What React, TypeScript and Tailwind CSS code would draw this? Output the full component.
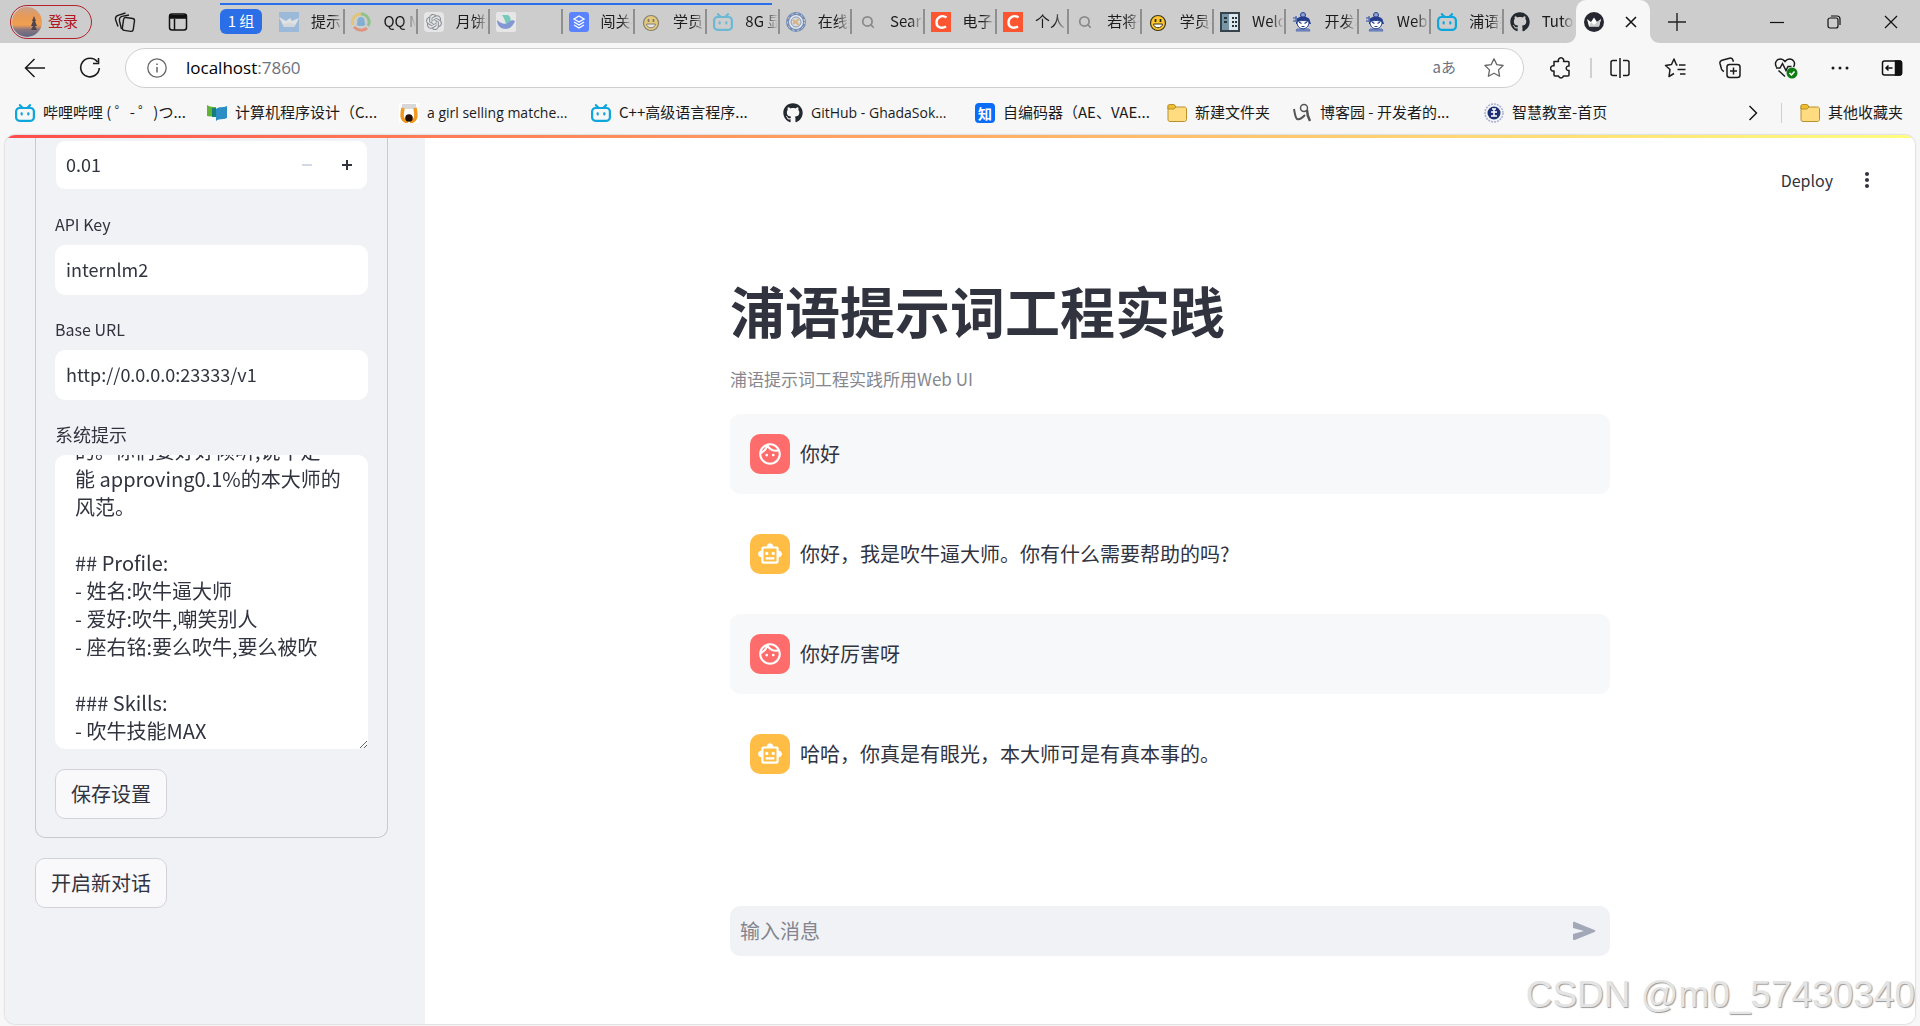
import { useEffect, useRef, useState } from 'react';
import type { ReactNode } from 'react';
import { FaGithub } from 'react-icons/fa';
import { MdOutlineFace, MdOutlineSmartToy, MdMoreVert } from 'react-icons/md';
import { SiBilibili, SiOpenai } from 'react-icons/si';
import { Search } from 'lucide-react';

const SYSTEM_PROMPT = `的。你们要好好倾听,说不定
能 approving0.1%的本大师的
风范。

## Profile:
- 姓名:吹牛逼大师
- 爱好:吹牛,嘲笑别人
- 座右铭:要么吹牛,要么被吹

### Skills:
- 吹牛技能MAX`;

const BilibiliIcon = () => <SiBilibili className="w-5 h-5 text-[#0fa6dc]" />;

const PaperBoatIcon = () => (
  <svg viewBox="0 0 20 20" className="w-5 h-5">
    <rect width="20" height="20" fill="#6aa8e8" />
    <path d="M0 5 7 9l4-3 2 3 7-3-3 6-2 3H5L3 11z" fill="#f2f5f9" />
    <path d="m4 12 7-1 5 1-1 3H6z" fill="#dde3ea" />
  </svg>
);

const QQMailIcon = () => (
  <svg viewBox="0 0 20 20" className="w-5 h-5" fill="none" strokeWidth="3">
    <path d="M2 13A8 8 0 0 1 10 2" stroke="#f1bd2a" />
    <path d="M10 2a8 8 0 0 1 7 12" stroke="#55b84b" />
    <path d="M3 15c4 4 10 4 13 1" stroke="#ed5a32" />
    <path d="M10 5c3 0 4 3 3.500 5l1 2.500-2 1.500H7.500l-2-1.500 1-2.500C6 8 7 5 10 5z" fill="#3b92d8" />
  </svg>
);

const ChatGptIcon = () => (
  <span className="flex items-center justify-center w-5 h-5 rounded bg-white">
    <SiOpenai className="w-4 h-4 text-gray-600" />
  </span>
);

const BirdIcon = () => (
  <svg viewBox="0 0 20 20" className="w-5 h-5">
    <rect width="20" height="20" rx="2" fill="#fff" />
    <path d="M6 3h6c3 2 3 5 2 7l-4 2C9 8 8 6 6 3z" fill="#1fc8ab" />
    <path d="M1 8c4 4 9 5 12 2 2-2 4-2 6-1-2 5-5 8-9 8-5 0-9-3-9-9z" fill="#3c62d8" />
  </svg>
);

const LayersIcon = () => (
  <svg viewBox="0 0 20 20" className="w-5 h-5">
    <rect width="20" height="20" rx="3" fill="#5b83ff" />
    <path d="m10 4 5 3-5 3-5-3zM5 10l5 3 5-3M5 13l5 3 5-3" fill="none" stroke="#fff" strokeWidth="1.300" />
  </svg>
);

const SmileIcon = () => (
  <svg viewBox="0 0 20 20" className="w-5 h-5">
    <circle cx="10" cy="11" r="7.500" fill="#fcc72c" stroke="#3d3415" strokeWidth="1.200" />
    <path d="M7.500 7v3M12.500 7v3" stroke="#2b2515" strokeWidth="1.700" />
    <path d="M5.500 12h9c-.5 5-8.500 5-9 0z" fill="#fff" stroke="#3d3415" />
  </svg>
);

const SealIcon = () => (
  <svg viewBox="0 0 20 20" className="w-5 h-5">
    <circle cx="10" cy="10" r="8.500" fill="#fff" stroke="#1d4f9f" strokeWidth="3" />
    <circle cx="10" cy="10" r="8.500" fill="none" stroke="#d5dfef" strokeWidth="1" strokeDasharray="2 3" />
    <circle cx="10" cy="10" r="5" fill="#dfe7f3" stroke="#3b6ab5" />
    <path d="m7 12 6-5M7 8l6 5" stroke="#e09a3c" strokeWidth="2" />
  </svg>
);

const MagnifierIcon = () => <Search className="w-3.5 h-3.5 text-[#8a8a8a]" strokeWidth={3} />;

const CsdnIcon = () => (
  <svg viewBox="0 0 20 20" className="w-5 h-5">
    <rect width="20" height="20" fill="#fc5531" />
    <path d="M15.500 5.500C11 2.500 5.500 5 5.500 10.500c0 5 5 6.500 9.500 4" fill="none" stroke="#fff" strokeWidth="2.400" />
  </svg>
);

const BuildingIcon = () => (
  <svg viewBox="0 0 20 20" className="w-5 h-5">
    <rect x="1" y="1" width="18" height="18" fill="#dde7ec" stroke="#35434c" strokeWidth="2" />
    <path d="M2 2h7v16H2z" fill="#7895a6" />
    <path d="M4 6h3M4 10h3M12 6h2M15 6h2M12 10h2M15 10h2M12 14h2M15 14h2" stroke="#26343d" strokeWidth="2" />
  </svg>
);

const MascotIcon = () => (
  <svg viewBox="0 0 20 20" className="w-5 h-5">
    <circle cx="11" cy="3" r="2.500" fill="#8da2d3" stroke="#253f8e" />
    <path d="M4 9c0-6 14-6 14 0l1 3H4z" fill="#253f8e" />
    <path d="M1 6h4M1 9h4M4 4v6" stroke="#5b73b4" strokeWidth="1.500" />
    <path d="M5 17h12l1 2H4z" fill="#7f92c6" stroke="#5b73b4" />
    <path d="M5 10c3-2 9-2 12 0 0 9-12 9-12 0z" fill="#fff" stroke="#253f8e" />
    <path d="m7 10 2.500 1.500M15 10l-2.500 1.500M9.500 14.500h3" stroke="#253f8e" strokeWidth="1.200" />
  </svg>
);

const CrownIcon = () => (
  <svg viewBox="0 0 20 20" className="w-5 h-5">
    <circle cx="10" cy="10" r="10" fill="#262730" />
    <path d="m3 7 4 3 3-4.500L13 10l4-3-2 7.500H5z" fill="#fff" />
    <path d="m7 10 3 3 3-3 4-3-2 7.500H5z" fill="#ccc" />
  </svg>
);

const BookIcon = () => (
  <svg viewBox="0 0 20 20" className="w-5 h-5">
    <path d="M0 2c3 2 6 2 9 2v9c-3 0-6 1-9 0z" fill="#61b236" />
    <path d="M20 3c-4 2-7 0-11 3v12c4-3 7-1 11-3z" fill="#2b8dc4" />
    <path d="M5 5h4v9H5z" fill="#177d76" />
  </svg>
);

const BearIcon = () => (
  <svg viewBox="0 0 20 20" className="w-5 h-5">
    <rect width="20" height="20" fill="#fff" />
    <path d="M3 1h14v5H3z" fill="#d8d8d8" />
    <path d="M4 5c-2 9-1 13 5 14M16 5c2 9 1 13-5 14" fill="none" stroke="#f19a1d" strokeWidth="3.500" />
    <circle cx="10" cy="15" r="3.800" fill="#241109" />
  </svg>
);

const ZhihuIcon = () => (
  <span className="flex items-center justify-center w-5 h-5 rounded bg-[#0b6cf8] text-white text-[14px] leading-5 font-bold">
    知
  </span>
);

const FolderIcon = () => (
  <svg viewBox="0 0 20 20" className="w-5 h-5">
    <path d="M1 5V3.500C1 2 2 1.500 3 1.500h4L9 4h8.500C19 4 19.500 5 19.500 6v10.500c0 1-1 2-2 2H3c-1.500 0-2-1-2-2z" fill="#ffdc80" stroke="#b8902c" />
    <path d="M1 6V3.500C1 2 2 1.500 3 1.500h4L9 4 7 6z" fill="#f0bd30" stroke="#b8902c" />
  </svg>
);

const CnblogsIcon = () => (
  <svg viewBox="0 0 20 20" className="w-5 h-5" fill="none" stroke="#555">
    <path d="M2 6c1 5 1 8 3 10 3 1 5-1 8-4" strokeWidth="2" />
    <circle cx="12" cy="5" r="3.500" strokeWidth="1.500" />
    <path d="M15 7c0 4 1 7 3 11" strokeWidth="2.500" />
  </svg>
);

const SchoolIcon = () => (
  <svg viewBox="0 0 20 20" className="w-5 h-5">
    <circle cx="10" cy="10" r="9" fill="#f3f4fa" stroke="#a9aecb" strokeWidth="1.500" strokeDasharray="2 1" />
    <circle cx="10" cy="10" r="6.500" fill="#1d2f72" />
    <path d="M8 6h4M7 9h6M10 6v7M7 13h6" stroke="#fff" strokeWidth="1.500" />
  </svg>
);

interface TabItem {
  title: string;
  icon: ReactNode;
  asleep?: boolean;
}

const groupedTabs: TabItem[] = [
  { title: '提示词', icon: <PaperBoatIcon />, asleep: true },
  { title: 'QQ Mail', icon: <QQMailIcon />, asleep: true },
  { title: '月饼盒', icon: <ChatGptIcon />, asleep: true },
  { title: '', icon: <BirdIcon />, asleep: true },
  { title: '闯关手', icon: <LayersIcon /> },
  { title: '学员手', icon: <SmileIcon />, asleep: true },
  { title: '8G 显存', icon: <BilibiliIcon />, asleep: true },
];

const looseTabs: TabItem[] = [
  { title: '在线编', icon: <SealIcon />, asleep: true },
  { title: 'Search', icon: <MagnifierIcon /> },
  { title: '电子书', icon: <CsdnIcon /> },
  { title: '个人中', icon: <CsdnIcon /> },
  { title: '若将一', icon: <MagnifierIcon /> },
  { title: '学员手', icon: <SmileIcon /> },
  { title: 'Welcome', icon: <BuildingIcon /> },
  { title: '开发机', icon: <MascotIcon /> },
  { title: 'Web ID', icon: <MascotIcon /> },
  { title: '浦语提', icon: <BilibiliIcon /> },
  { title: 'Tutorial', icon: <FaGithub className="w-5 h-5 text-[#24292f]" /> },
];

const bookmarks = [
  { title: '哔哩哔哩 ( ゜- ゜)つ...', icon: <BilibiliIcon />, style: 'w-48' },
  { title: '计算机程序设计（C...', icon: <BookIcon />, style: 'w-48' },
  { title: 'a girl selling matche...', icon: <BearIcon />, style: "w-48 font-['Open_Sans',sans-serif] text-[14px]" },
  { title: 'C++高级语言程序...', icon: <BilibiliIcon />, style: 'w-48' },
  {
    title: 'GitHub - GhadaSok...',
    icon: <FaGithub className="w-5 h-5 text-[#24292f]" />,
    style: "w-48 font-['Open_Sans',sans-serif] text-[14px]",
  },
  { title: '自编码器（AE、VAE...', icon: <ZhihuIcon />, style: 'w-48' },
  { title: '新建文件夹', icon: <FolderIcon />, style: 'w-[125px]' },
  { title: '博客园 - 开发者的...', icon: <CnblogsIcon />, style: 'w-48' },
  { title: '智慧教室-首页', icon: <SchoolIcon />, style: 'w-[125px]' },
];

const Tab = ({ title, icon, asleep }: TabItem) => (
  <button className="flex flex-1 min-w-0 h-[25px] items-center border-r-2 border-[#8f8f8f] pl-1.5 last:border-transparent">
    <span className={`flex w-5 h-5 shrink-0 items-center justify-center ${asleep ? 'opacity-50' : ''}`}>{icon}</span>
    <span className="ml-3 flex-1 overflow-hidden text-left whitespace-nowrap mask-r-from-60%">{title}</span>
  </button>
);

const TabStrip = () => (
  <div className="flex h-[43px] items-center bg-[#cdcdcd]">
    <div className="flex w-[220px] shrink-0 items-center pl-2.5">
      <button className="flex h-[34px] w-[82px] items-center gap-1.5 rounded-full border border-[#b3202c] pl-px text-[#b3151f]">
        <svg viewBox="0 0 30 30" className="w-[30px] h-[30px]">
          <defs>
            <linearGradient id="sunset" x1="0" y1="0" x2="0" y2="1">
              <stop offset="0" stopColor="#c9a08a" />
              <stop offset=".3" stopColor="#e79a58" />
              <stop offset=".6" stopColor="#f0a050" />
              <stop offset=".75" stopColor="#8d7580" />
              <stop offset="1" stopColor="#5d6684" />
            </linearGradient>
          </defs>
          <circle cx="15" cy="15" r="15" fill="url(#sunset)" />
          <path d="m22 9-2 5h1l-2 5h2l-2 4h6l-2-4h2l-2-5h1z" fill="#4f4450" />
        </svg>
        登录
      </button>
      <button aria-label="工作区" className="ml-[22px]">
        <svg viewBox="0 0 22 22" className="w-[22px] h-[22px]" fill="none" stroke="#1b1b1b" strokeWidth="1.400">
          <rect x="9" y="7" width="11" height="13" rx="2.200" transform="rotate(8 15 13)" />
          <path d="m7.500 18-2-8c-.4-2.500.5-4 2.500-4.600L15 4" />
          <path d="m4 15.500-2.300-6.500c-.6-2.500.2-4 2.300-4.700L11.500 2" />
        </svg>
      </button>
      <button aria-label="标签页操作" className="ml-8">
        <svg viewBox="0 0 20 20" className="w-5 h-5" fill="none" stroke="#111" strokeWidth="1.500">
          <rect x="1.500" y="2" width="17" height="16" rx="2.500" />
          <path d="M2 3.500h16v2.500H2z" fill="#111" />
          <path d="M6.500 7v11" />
        </svg>
      </button>
    </div>

    <div className="relative flex h-full min-w-0 flex-[7_1_53px] items-center">
      <span className="absolute top-[3px] right-2 left-0 h-0.5 bg-[#2a6ee8]" />
      <button className="mr-[11px] h-[25px] w-[42px] shrink-0 rounded-md bg-[#2a6ee8] text-white">1 组</button>
      {groupedTabs.map((tab, i) => (
        <Tab key={i} {...tab} />
      ))}
      <span className="absolute right-0 h-[25px] w-0.5 bg-[#8f8f8f]" />
    </div>
    <div className="flex min-w-0 flex-[11_1_0px] items-center">
      {looseTabs.map((tab, i) => (
        <Tab key={i} {...tab} />
      ))}
    </div>

    <div className="relative flex h-full w-[74px] shrink-0 items-center justify-between rounded-t-[10px] bg-[#f7f7f7] pr-3 pl-2">
      <svg viewBox="0 0 10 10" className="absolute bottom-0 -left-2.5 w-2.5 h-2.5">
        <path d="M10 0v10H0C6 10 10 6 10 0z" fill="#f7f7f7" />
      </svg>
      <svg viewBox="0 0 10 10" className="absolute bottom-0 -right-2.5 w-2.5 h-2.5">
        <path d="M0 0v10h10C4 10 0 6 0 0z" fill="#f7f7f7" />
      </svg>
      <CrownIcon />
      <button aria-label="关闭标签页">
        <svg viewBox="0 0 14 14" className="w-3.5 h-3.5" stroke="#111" strokeWidth="1.500">
          <path d="m2 2 10 10M12 2 2 12" />
        </svg>
      </button>
    </div>
    <div className="flex w-[270px] shrink-0 items-center pl-[17px]">
      <button aria-label="新建标签页">
        <svg viewBox="0 0 20 20" className="w-5 h-5" stroke="#222" strokeWidth="1.400">
          <path d="M10 1v18M1 10h18" />
        </svg>
      </button>
      <div className="ml-auto flex items-center gap-[43px] pr-[22px]">
        <button aria-label="最小化">
          <svg viewBox="0 0 14 14" className="w-3.5 h-3.5" stroke="#111" strokeWidth="1.200">
            <path d="M0 7.500h14" />
          </svg>
        </button>
        <button aria-label="还原">
          <svg viewBox="0 0 14 14" className="w-3.5 h-3.5" fill="none" stroke="#111" strokeWidth="1.200">
            <rect x="1" y="3" width="10" height="10" rx="2" />
            <path d="M4 1h6c2 0 3 1 3 3v6" />
          </svg>
        </button>
        <button aria-label="关闭">
          <svg viewBox="0 0 14 14" className="w-3.5 h-3.5" stroke="#111" strokeWidth="1.200">
            <path d="m1 1 12 12M13 1 1 13" />
          </svg>
        </button>
      </div>
    </div>
  </div>
);

const STAR_PATH = 'm11 1.800 2.800 5.800 6.300.9-4.600 4.400 1.100 6.300-5.600-3-5.600 3 1.100-6.300-4.600-4.400 6.300-.9z';

const Toolbar = () => (
  <div className="flex h-[49px] items-center pr-[17px] pl-6">
    <button aria-label="后退">
      <svg viewBox="0 0 22 22" className="w-[22px] h-[22px]" fill="none" stroke="#1b1b1b" strokeWidth="1.500">
        <path d="M21 11H2M10.500 2 1.500 11l9 9" />
      </svg>
    </button>
    <button aria-label="刷新" className="ml-[33px]">
      <svg viewBox="0 0 22 22" className="w-[22px] h-[22px]" fill="none" stroke="#1b1b1b" strokeWidth="1.600">
        <path d="M18.500 5A9.300 9.300 0 1 0 20.300 11" />
        <path d="M19.500 1v5.500H14" />
      </svg>
    </button>
    <div className="ml-6 flex h-10 min-w-0 flex-1 items-center rounded-full border border-[#cfcfcf] bg-white pr-[18px] pl-[21px]">
      <svg viewBox="0 0 20 20" className="w-5 h-5" fill="none" stroke="#666" strokeWidth="1.300">
        <circle cx="10" cy="10" r="9.200" />
        <path d="M10 9v5.500M10 5.500v1.600" strokeWidth="1.500" />
      </svg>
      <a href="#" className="ml-[19px] flex-1 font-['Open_Sans','Noto_Sans_CJK_SC',sans-serif] text-[17px] text-black">
        localhost<span className="text-gray-500">:7860</span>
      </a>
      <button aria-label="翻译" className="text-[15px] text-gray-500">aあ</button>
      <button aria-label="收藏" className="ml-[27px]">
        <svg viewBox="0 0 22 22" className="w-[22px] h-[22px]" fill="none" stroke="#666" strokeWidth="1.300" strokeLinejoin="round">
          <path d={STAR_PATH} />
        </svg>
      </button>
    </div>
    <div className="ml-[26px] flex items-center">
      <button aria-label="扩展">
        <svg viewBox="0 0 22 22" className="w-[22px] h-[22px]" fill="none" stroke="#1b1b1b" strokeWidth="1.500" strokeLinejoin="round">
          <path d="M4 4.500h4.500a2.700 2.700 0 1 1 5 0H18c.7 0 1 .3 1 1V9a2.300 2.300 0 1 0 0 4.500V18c0 .7-.3 1-1 1h-4.500a2.600 2.600 0 0 1-5 0H5c-.7 0-1-.3-1-1v-4a2.700 2.700 0 1 1 0-5.200z" />
        </svg>
      </button>
      <span className="mr-[18px] ml-[18px] h-5 w-0.5 bg-[#d0d0d0]" />
      <button aria-label="拆分屏幕">
        <svg viewBox="0 0 20 20" className="w-5 h-5" fill="none" stroke="#1b1b1b" strokeWidth="1.500">
          <path d="M7 2.500H3c-1.500 0-2 .8-2 2v11c0 1.200.5 2 2 2h4M13 2.500h4c1.500 0 2 .8 2 2v11c0 1.200-.5 2-2 2h-4M10 0v20" />
        </svg>
      </button>
      <button aria-label="收藏夹" className="ml-[34px]">
        <svg viewBox="0 0 22 22" className="w-[22px] h-[22px]" fill="none" stroke="#1b1b1b" strokeWidth="1.500" strokeLinejoin="round">
          <path d="M13.500 8h-1L10 2 7.500 7.500l-6 1 4.500 4-1 7 5-3M15 8h6.500M13.500 12.500h8M16 17h5.500" />
        </svg>
      </button>
      <button aria-label="集锦" className="ml-[33px]">
        <svg viewBox="0 0 22 22" className="w-[22px] h-[22px]" fill="none" stroke="#1b1b1b" strokeWidth="1.500">
          <rect x="8" y="7.500" width="13" height="13" rx="2.500" />
          <path d="M14.500 10.500v7M11 14h7M5 14.500c-1.500-.5-2-1-2.500-2.500L1 6.500C.6 4.800 1.300 3.700 3 3.200l7.500-2c1.800-.5 3 .3 3.500 2l.4 1.500" />
        </svg>
      </button>
      <button aria-label="浏览器概要" className="ml-[33px]">
        <svg viewBox="0 0 24 22" className="w-6 h-[22px]" fill="none" stroke="#1b1b1b" strokeWidth="1.500">
          <path d="M2.500 10C0 6 2.500 2 6.500 2c2 0 3.300 1 4.500 2.500C12.200 3 13.500 2 15.500 2c4 0 6.500 4 4 8M2 11h4l2.500-4.500 3.500 7L14 9.500h3.500M4.500 13.500l6.500 6" />
          <circle cx="18" cy="16" r="5.500" fill="#0f7b10" stroke="none" />
          <path d="m15.500 16 2 2 3-3.500" stroke="#fff" />
        </svg>
      </button>
      <button aria-label="设置及其他" className="ml-[33px]">
        <svg viewBox="0 0 18 18" className="w-[18px] h-[18px]" fill="#1b1b1b">
          <circle cx="2" cy="9" r="1.500" />
          <circle cx="9" cy="9" r="1.500" />
          <circle cx="16" cy="9" r="1.500" />
        </svg>
      </button>
      <button aria-label="侧栏" className="ml-8">
        <svg viewBox="0 0 22 22" className="w-[22px] h-[22px]" fill="none" stroke="#111" strokeWidth="1.500">
          <rect x="1.500" y="4" width="19" height="14" rx="2" />
          <path d="M14.500 4h4c1.500 0 2 .5 2 2v10c0 1.500-.5 2-2 2h-4z" fill="#111" />
          <path d="M11.500 11H5M7.500 8.500 5 11l2.500 2.500" />
        </svg>
      </button>
    </div>
  </div>
);

const BookmarkBar = () => (
  <nav className="flex h-[43px] items-center pr-[17px] pb-0.5 pl-[15px]">
    {bookmarks.map(({ title, icon, style }) => (
      <a key={title} href="#" className={`flex shrink-0 items-center gap-2 whitespace-nowrap ${style}`}>
        {icon}
        {title}
      </a>
    ))}
    <button aria-label="更多收藏" className="ml-auto">
      <svg viewBox="0 0 10 16" className="w-2.5 h-4" fill="none" stroke="#111" strokeWidth="1.400">
        <path d="m1.500 1 7 7-7 7" />
      </svg>
    </button>
    <span className="mr-[18px] ml-[23px] h-5 w-px bg-[#cfcfcf]" />
    <a href="#" className="flex items-center gap-2 whitespace-nowrap">
      <FolderIcon />
      其他收藏夹
    </a>
  </nav>
);

const Sidebar = () => {
  const [rate, setRate] = useState('0.01');
  const [apiKey, setApiKey] = useState('internlm2');
  const [baseUrl, setBaseUrl] = useState('http://0.0.0.0:23333/v1');
  const [prompt, setPrompt] = useState(SYSTEM_PROMPT);
  const promptRef = useRef<HTMLTextAreaElement | null>(null);

  useEffect(() => {
    if (promptRef.current) {
      promptRef.current.scrollTop = 38;
    }
  }, []);

  return (
    <aside className="w-[420px] shrink-0 bg-[#f0f2f6] pr-[37px] pl-[30px]">
      <form className="rounded-b-[10px] border border-t-0 border-[#c9cacf] px-[19px] pb-[18px] pt-0.5">
        <div className="flex h-[50px] items-center rounded-[10px] border border-[#f0f2f6] bg-white px-2.5">
          <input
            aria-label="temperature"
            value={rate}
            onChange={(e) => setRate(e.target.value)}
            className="min-w-0 flex-1 pb-0.5 text-[18px] outline-none"
          />
          <button type="button" aria-label="减少" className="flex w-10 justify-end pr-[5px]">
            <svg viewBox="0 0 10 10" className="w-2.5 h-2.5" stroke="#d3d9e4" strokeWidth="2">
              <path d="M0 5h10" />
            </svg>
          </button>
          <button type="button" aria-label="增加" className="flex w-10 justify-end pr-[5px]">
            <svg viewBox="0 0 10 10" className="w-2.5 h-2.5" stroke="#31333f" strokeWidth="2">
              <path d="M0 5h10M5 0v10" />
            </svg>
          </button>
        </div>

        <label htmlFor="api-key" className="mt-5 mb-[7px] block text-[16px] leading-7">API Key</label>
        <input
          id="api-key"
          value={apiKey}
          onChange={(e) => setApiKey(e.target.value)}
          className="block h-[50px] w-full rounded-[10px] bg-white px-[11px] pb-0.5 text-[18px] outline-none"
        />

        <label htmlFor="base-url" className="mt-5 mb-[7px] block text-[16px] leading-7">Base URL</label>
        <input
          id="base-url"
          value={baseUrl}
          onChange={(e) => setBaseUrl(e.target.value)}
          className="block h-[50px] w-full rounded-[10px] bg-white px-[11px] pb-0.5 text-[18px] outline-none"
        />

        <label htmlFor="system-prompt" className="mt-5 mb-[7px] block text-[18px] leading-7">系统提示</label>
        <textarea
          id="system-prompt"
          ref={promptRef}
          value={prompt}
          onChange={(e) => setPrompt(e.target.value)}
          className="block h-[294px] w-full resize-y rounded-[10px] bg-white p-5 text-[20px] leading-7 outline-none [scrollbar-width:none]"
        />

        <button type="button" className="mt-5 h-[50px] rounded-[10px] border border-[#d2d3d8] bg-[#f9f9fb] px-[15px] text-[20px]">
          保存设置
        </button>
      </form>
      <button className="mt-5 h-[50px] rounded-[10px] border border-[#d2d3d8] bg-[#f9f9fb] px-[15px] text-[20px]">
        开启新对话
      </button>
    </aside>
  );
};

const messages = [
  { role: 'user', content: '你好' },
  { role: 'assistant', content: '你好，我是吹牛逼大师。你有什么需要帮助的吗?' },
  { role: 'user', content: '你好厉害呀' },
  { role: 'assistant', content: '哈哈，你真是有眼光，本大师可是有真本事的。' },
];

const Chat = () => {
  const [draft, setDraft] = useState('');

  return (
    <main className="relative flex min-w-0 flex-1 flex-col bg-white px-[30px]">
      <header className="flex h-[84px] items-center justify-end gap-[22px] pr-1.5">
        <button className="text-[16px]">Deploy</button>
        <button aria-label="菜单">
          <MdMoreVert className="w-6 h-6" />
        </button>
      </header>

      <div className="mx-auto flex w-full max-w-[880px] flex-1 flex-col pt-12">
        <h1 className="text-[55px] leading-[78px] font-bold">浦语提示词工程实践</h1>
        <p className="mt-[17px] text-[17px] leading-7 text-[#86878e]">浦语提示词工程实践所用Web UI</p>
        <div className="mt-[21px] flex flex-col gap-5">
          {messages.map(({ role, content }) => (
            <div
              key={content}
              className={`flex h-20 items-center gap-2.5 rounded-[10px] px-5 text-[20px] ${role === 'user' ? 'bg-[#f7f8fa]' : ''}`}
            >
              <span
                className={`flex h-10 w-10 items-center justify-center rounded-[10px] text-white ${role === 'user' ? 'bg-[#ff6c6c]' : 'bg-[#ffbd45]'}`}
              >
                {role === 'user' ? <MdOutlineFace className="w-[26px] h-[26px]" /> : <MdOutlineSmartToy className="w-[26px] h-[26px]" />}
              </span>
              <p>{content}</p>
            </div>
          ))}
        </div>

        <div className="mt-auto mb-[68px] flex h-[50px] items-center rounded-[10px] bg-[#f0f2f6] pr-3.5 pl-2.5">
          <input
            aria-label="输入消息"
            placeholder="输入消息"
            value={draft}
            onChange={(e) => setDraft(e.target.value)}
            className="min-w-0 flex-1 text-[20px] outline-none placeholder:text-[#84858e]"
          />
          <button aria-label="发送">
            <svg viewBox="0 0 24 20" className="w-6 h-5" fill="#a3a8b8">
              <path d="M1 2c0-1 .8-1.400 1.800-1L22.500 9c1.200.5 1.200 1.500 0 2L2.800 19C1.800 19.400 1 19 1 18v-5l11-3L1 7z" />
            </svg>
          </button>
        </div>
      </div>

      <span className="pointer-events-none absolute right-0 bottom-1.5 font-['Liberation_Sans',sans-serif] text-[37px] leading-[46px] whitespace-nowrap text-[#e4e4e4] [text-shadow:1px_1px_1px_#999]">
        CSDN @m0_57430340
      </span>
    </main>
  );
};

export default function App() {
  return (
    <div className="flex h-screen flex-col bg-[#f7f7f7] font-['Noto_Sans_CJK_SC',sans-serif] text-[15px] text-[#1b1b1b]">
      <TabStrip />
      <Toolbar />
      <BookmarkBar />
      <div className="mx-[5px] mb-0.5 flex min-h-0 flex-1 flex-col overflow-hidden rounded-[10px] text-[#31333f] shadow-[0_0_2px_rgba(0,0,0,0.3)]">
        <div className="h-[3px] shrink-0 bg-linear-to-r from-[#ff4b4b] to-[#fffd80]" />
        <div className="flex min-h-0 flex-1">
          <Sidebar />
          <Chat />
        </div>
      </div>
    </div>
  );
}
